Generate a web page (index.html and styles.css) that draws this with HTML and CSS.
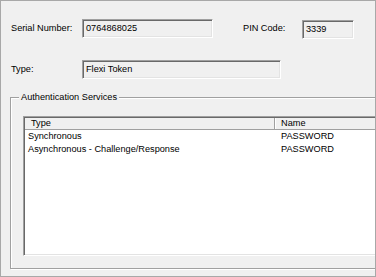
FILE: index.html
```html
<!DOCTYPE html>
<html>
<head>
<meta charset="utf-8">
<link rel="stylesheet" href="styles.css">
</head>
<body>
<div class="dialog">
  <div class="row row-serial">
    <span class="label label-serial">Serial Number:</span>
    <div class="field field-serial">0764868025</div>
    <span class="label label-pin">PIN Code:</span>
    <div class="field field-pin">3339</div>
  </div>
  <div class="row row-type">
    <span class="label label-type">Type:</span>
    <div class="field field-type">Flexi Token</div>
  </div>
  <fieldset class="group">
    <legend class="group-title">Authentication Services</legend>
    <div class="list">
      <div class="list-head">
        <div class="col col-type">Type</div>
        <div class="col col-name">Name</div>
      </div>
      <div class="list-row">
        <div class="cell cell-type">Synchronous</div>
        <div class="cell cell-name">PASSWORD</div>
      </div>
      <div class="list-row">
        <div class="cell cell-type">Asynchronous - Challenge/Response</div>
        <div class="cell cell-name">PASSWORD</div>
      </div>
    </div>
  </fieldset>
</div>
</body>
</html>
```

FILE: styles.css
```css
* { box-sizing: border-box; }
body { margin: 0; }
.dialog {
  width: 376px;
  height: 277px;
  border: 1px solid #a8a8a8;
  background: #f0f0f0;
  overflow: hidden;
  font-family: "Liberation Sans", Arial, sans-serif;
  font-size: 9.2px;
  color: #000;
  padding: 18px 0 0 10px;
}
.row { display: flex; align-items: flex-start; }
.label { width: 71px; line-height: 19px; flex: none; }
.field {
  flex: none;
  height: 19px;
  border: 1px solid;
  border-color: #a0a0a0 #fff #fff #a0a0a0;
  box-shadow: inset 1px 1px #696969, inset -1px -1px #e3e3e3;
  padding-left: 3px;
  line-height: 17px;
  white-space: nowrap;
}
.field-serial { width: 131px; }
.label-pin { margin-left: 30px; width: 59px; }
.field-pin { width: 52px; margin-top: 1px; }
.row-type { margin-top: 21px; }
.field-type { width: 199px; }
.group {
  margin: 13px 0 0 -1px;
  padding: 0 0 12px 0;
  width: 400px;
  min-inline-size: auto;
  border: 1px solid #a0a0a0;
  box-shadow: inset 1px 1px #fff, 1px 1px #fff;
}
.group-title {
  padding: 0 2px;
  margin-left: 8px;
  line-height: 11px;
  background: #f0f0f0;
}
.list {
  margin: 13px 0 0 12px;
  height: 140px;
  width: 400px;
  padding: 1px;
  border: 1px solid;
  border-color: #a0a0a0 #fff #fff #a0a0a0;
  box-shadow: inset 1px 1px #696969, inset -1px -1px #e3e3e3;
  background: #fff;
}
.list-head {
  display: flex;
  height: 12px;
  line-height: 11px;
  background: #f0f0f0;
  border-bottom: 1px solid #a0a0a0;
}
.col { white-space: nowrap; }
.col-type {
  width: 250px;
  padding-left: 6px;
  border-right: 1px solid #a0a0a0;
  box-shadow: 1px 0 #fff;
}
.col-name { padding-left: 6px; }
.list-row { display: flex; line-height: 13px; }
.cell { white-space: nowrap; }
.cell-type { width: 250px; padding-left: 3px; }
.cell-name { padding-left: 6px; }
```
